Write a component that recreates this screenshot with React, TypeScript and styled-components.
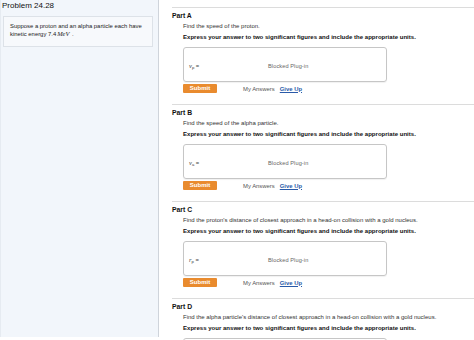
import styled, { createGlobalStyle } from "styled-components";

const GlobalStyle = createGlobalStyle`
  html, body {
    margin: 0;
    padding: 0;
    background: #ffffff;
  }
  body {
    font-family: "Liberation Sans", Arial, sans-serif;
    color: #333;
  }
`

interface PartData {
  letter: string
  question: string
  symbol: string
  sub: string
}

const parts: PartData[] = [
  { letter: 'A', question: 'Find the speed of the proton.', symbol: 'v', sub: 'p' },
  { letter: 'B', question: 'Find the speed of the alpha particle.', symbol: 'v', sub: 'a' },
  { letter: 'C', question: "Find the proton's distance of closest approach in a head-on collision with a gold nucleus.", symbol: 'r', sub: 'p' },
  { letter: 'D', question: "Find the alpha particle's distance of closest approach in a head-on collision with a gold nucleus.", symbol: 'r', sub: 'a' },
]

const instructions = 'Express your answer to two significant figures and include the appropriate units.'

function Part({ part }: { part: PartData }) {
  return (
    <Section>
      <PartLabel>Part {part.letter}</PartLabel>
      <Indent>
        <Question>{part.question}</Question>
        <Instructions>{instructions}</Instructions>
        <AnswerBox>
          <Variable>
            <i>{part.symbol}</i><sub>{part.sub}</sub> =
          </Variable>
          <Plugin>Blocked Plug-in</Plugin>
        </AnswerBox>
        <Actions>
          <Submit>Submit</Submit>
          <MyAnswers>My Answers</MyAnswers>
          <GiveUp href="#">Give Up</GiveUp>
        </Actions>
      </Indent>
    </Section>
  )
}

export default function App() {
  return (
    <>
      <GlobalStyle />
      <Page>
        <Sidebar>
          <Title>Problem 24.28</Title>
          <Intro>
            Suppose a proton and an alpha particle each have kinetic energy 7.4<Unit>MeV</Unit> .
          </Intro>
        </Sidebar>
        <Main>
          {parts.map((p) => <Part key={p.letter} part={p} />)}
        </Main>
      </Page>
    </>
  )
}

const Page = styled.div`
  display: flex;
  width: 474px;
  height: 340px;
  overflow: hidden;
`

const Sidebar = styled.div`
  width: 159px;
  height: 337px;
  flex-shrink: 0;
  background: #f2f6fb;
  border-right: 1px solid #cfd4db;
  border-left: 1px solid #e6ebf1;
  box-sizing: border-box;
  padding: 0 5px 0 2px;
`

const Title = styled.div`
  font-size: 8px;
  line-height: 10px;
  padding-top: 1px;
  color: #111;
  margin-left: -1px;
`

const Intro = styled.div`
  margin-top: 5px;
  border: 1px solid #dde2e8;
  background: #f7f9fc;
  padding: 5px 5px 8px 6px;
  font-size: 5.9px;
  line-height: 8px;
  color: #222;
`

const Unit = styled.span`
  font-family: "Liberation Serif", "Times New Roman", serif;
  font-style: italic;
  font-size: 6.5px;
  line-height: 1;
  margin-left: 1px;
  margin-right: 1px;
`

const Main = styled.div`
  flex: 1;
  padding: 7px 0 0 13px;
`

const Section = styled.div`
  border-top: 1px solid #dcdcdc;
  padding-bottom: 11px;
`

const PartLabel = styled.div`
  margin-top: 4px;
  font-size: 6.8px;
  line-height: 8px;
  font-weight: bold;
  color: #111;
`

const Indent = styled.div`
  padding-left: 11px;
`

const Question = styled.div`
  margin-top: 2px;
  font-size: 6px;
  line-height: 8px;
  color: #333;
  white-space: nowrap;
`

const Instructions = styled.div`
  margin-top: 3px;
  font-size: 6.05px;
  line-height: 8px;
  font-weight: bold;
  color: #111;
  white-space: nowrap;
`

const AnswerBox = styled.div`
  margin-top: 6px;
  width: 204px;
  height: 35px;
  box-sizing: border-box;
  border: 1px solid #c6c6c6;
  border-radius: 3px;
  box-shadow: 0 1px 1px rgba(0, 0, 0, 0.06);
  display: flex;
  align-items: center;
  padding-top: 2px;
`

const Variable = styled.div`
  width: 84px;
  padding-left: 5px;
  box-sizing: border-box;
  font-size: 5.8px;
  color: #444;

  i {
    font-family: "Liberation Serif", serif;
    font-size: 6.5px;
  }

  sub {
    font-size: 4.2px;
    vertical-align: -1px;
  }
`

const Plugin = styled.div`
  font-size: 5.6px;
  color: #666;
  letter-spacing: 0.1px;
`

const Actions = styled.div`
  margin-top: 2px;
  height: 9px;
  display: flex;
  align-items: center;
`

const Submit = styled.button`
  width: 34px;
  height: 9px;
  border: none;
  border-radius: 1px;
  padding: 0;
  background: #e98b2e;
  color: #fff;
  font-family: "Liberation Sans", Arial, sans-serif;
  font-weight: bold;
  font-size: 6px;
  line-height: 9px;
`

const MyAnswers = styled.span`
  margin-left: 26px;
  font-size: 5.9px;
  color: #555;
`

const GiveUp = styled.a`
  margin-left: 5px;
  font-size: 5.9px;
  font-weight: bold;
  color: #2a5aa8;
  text-decoration: underline;
`
